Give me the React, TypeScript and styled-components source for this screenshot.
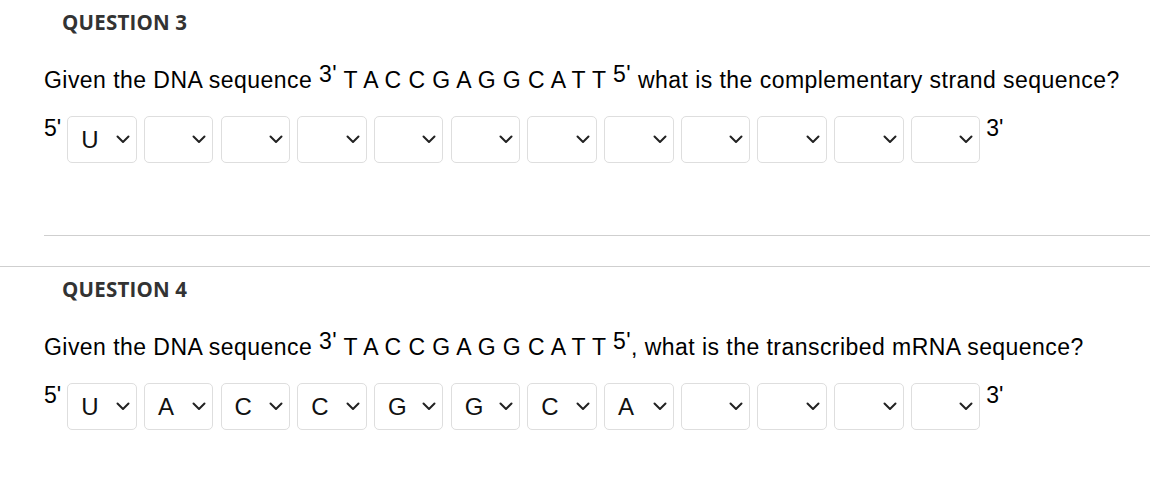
import styled, { createGlobalStyle } from 'styled-components'

const GlobalStyle = createGlobalStyle`
  html, body {
    margin: 0;
    padding: 0;
    background: #fff;
  }
  body {
    font-family: "Liberation Sans", Arial, sans-serif;
    color: #000;
  }
`

const Page = styled.div`
  width: 1150px;
  height: 502px;
  overflow: hidden;
  background: #fff;
`

const Section = styled.section<{ $top?: boolean }>`
  padding: 9px 0 0 44px;
  border-top: ${(p) => (p.$top ? '1px solid #cfcfcf' : 'none')};
`

const Heading = styled.h2`
  margin: 0 0 0 18px;
  font-family: "Open Sans", "Liberation Sans", sans-serif;
  font-weight: 700;
  font-size: 20.5px;
  line-height: 27px;
  color: #333;
  letter-spacing: 0.2px;
`

const Prompt = styled.p`
  margin: 32px 0 0;
  font-size: 23px;
  line-height: 25px;
  letter-spacing: 0.45px;
  white-space: nowrap;
`

const Prime = styled.span`
  vertical-align: 6px;
  line-height: 0;
`

const Row = styled.div`
  display: flex;
  align-items: flex-start;
  margin-top: 23px;
`

const End = styled.span<{ $side: 'left' | 'right' }>`
  font-size: 23px;
  line-height: 25px;
  margin: ${(p) => (p.$side === 'left' ? '0 6px 0 0' : '0 0 0 6px')};
`

const Boxes = styled.div`
  display: flex;
  gap: 7.2px;
`

const Pick = styled.div`
  box-sizing: border-box;
  width: 69.5px;
  height: 47px;
  border: 1px solid #dedede;
  border-radius: 5px;
  background: #fff;
  display: flex;
  align-items: center;
  justify-content: space-between;
  padding: 0 6px 0 13px;
  font-size: 24px;
  color: #111;
`

const Chevron = () => (
  <svg width="14" height="9" viewBox="0 0 14 9" fill="none">
    <path d="M1.5 1.5 L7 7 L12.5 1.5" stroke="#222" strokeWidth="2" strokeLinecap="round" strokeLinejoin="round" />
  </svg>
)

const Divider = styled.hr`
  margin: 72px 0 30px;
  border: none;
  border-top: 1px solid #cfcfcf;
  height: 0;
`

const SEQ = 'T A C C G A G G C A T T'

function Answer({ values }: { values: string[] }) {
  const cells = Array.from({ length: 12 }, (_, i) => values[i] ?? '')
  return (
    <Row>
      <End $side="left">5'</End>
      <Boxes>
        {cells.map((v, i) => (
          <Pick key={i}>
            <span>{v}</span>
            <Chevron />
          </Pick>
        ))}
      </Boxes>
      <End $side="right">3'</End>
    </Row>
  )
}

export default function App() {
  return (
    <Page>
      <GlobalStyle />
      <Section>
        <Heading>QUESTION 3</Heading>
        <Prompt>
          Given the DNA sequence <Prime>3'</Prime> {SEQ} <Prime>5'</Prime> what is the complementary strand sequence?
        </Prompt>
        <Answer values={['U']} />
        <Divider />
      </Section>
      <Section $top>
        <Heading>QUESTION 4</Heading>
        <Prompt>
          Given the DNA sequence <Prime>3'</Prime> {SEQ} <Prime>5'</Prime>, what is the transcribed mRNA sequence?
        </Prompt>
        <Answer values={['U', 'A', 'C', 'C', 'G', 'G', 'C', 'A']} />
      </Section>
    </Page>
  )
}
